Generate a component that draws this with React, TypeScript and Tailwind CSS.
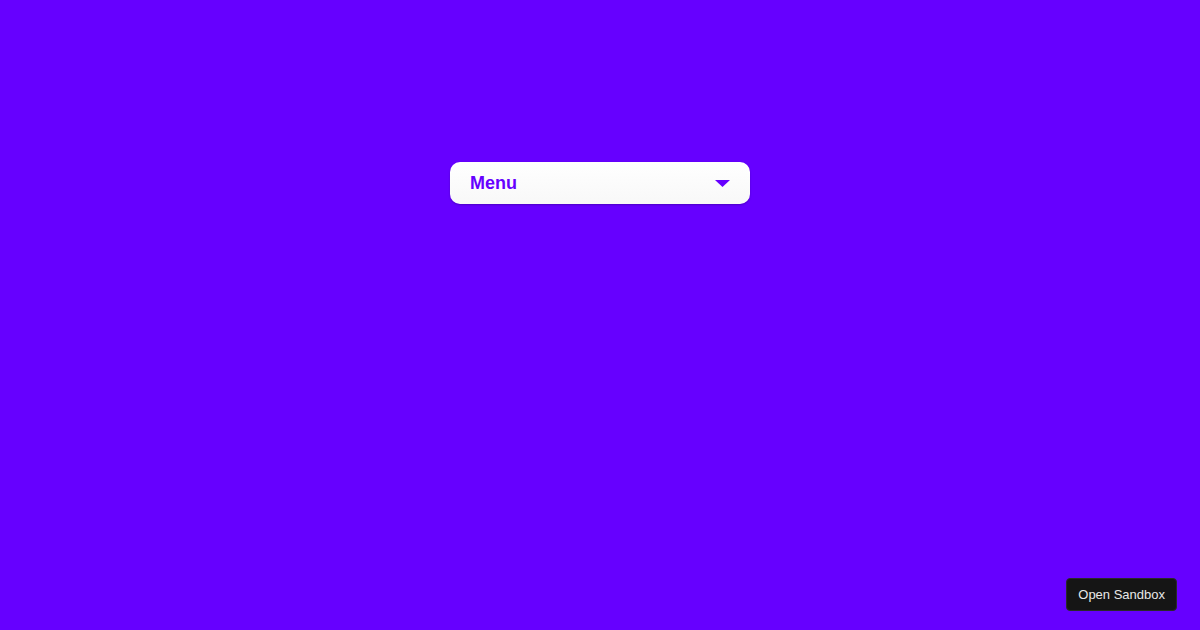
export default function App() {
  return (
    <div className="relative h-[630px] w-[1200px] overflow-hidden bg-[#6600ff] font-['Liberation_Sans',Arial,sans-serif]">
      <div className="flex justify-center pt-[162px]">
        <button className="flex h-[42px] w-[300px] items-center justify-between rounded-[10px] bg-gradient-to-b from-white to-[#f8f8f8] pl-[20px] pr-[20px] shadow-[0_1px_2px_rgba(40,0,110,0.4)]">
          <span className="text-[18px] font-bold text-[#6600ff]">Menu</span>
          <svg width="15" height="7" viewBox="0 0 15 7" className="mt-[1px]">
            <path d="M0 0H15L7.5 7Z" fill="#6600ff" />
          </svg>
        </button>
      </div>
      <button className="absolute bottom-[19px] right-[23px] h-[33px] rounded-[4px] border border-[#2a2a2a] bg-[#151515] px-[11px] text-[13px] text-[#e8e8e8]">
        Open Sandbox
      </button>
    </div>
  );
}
